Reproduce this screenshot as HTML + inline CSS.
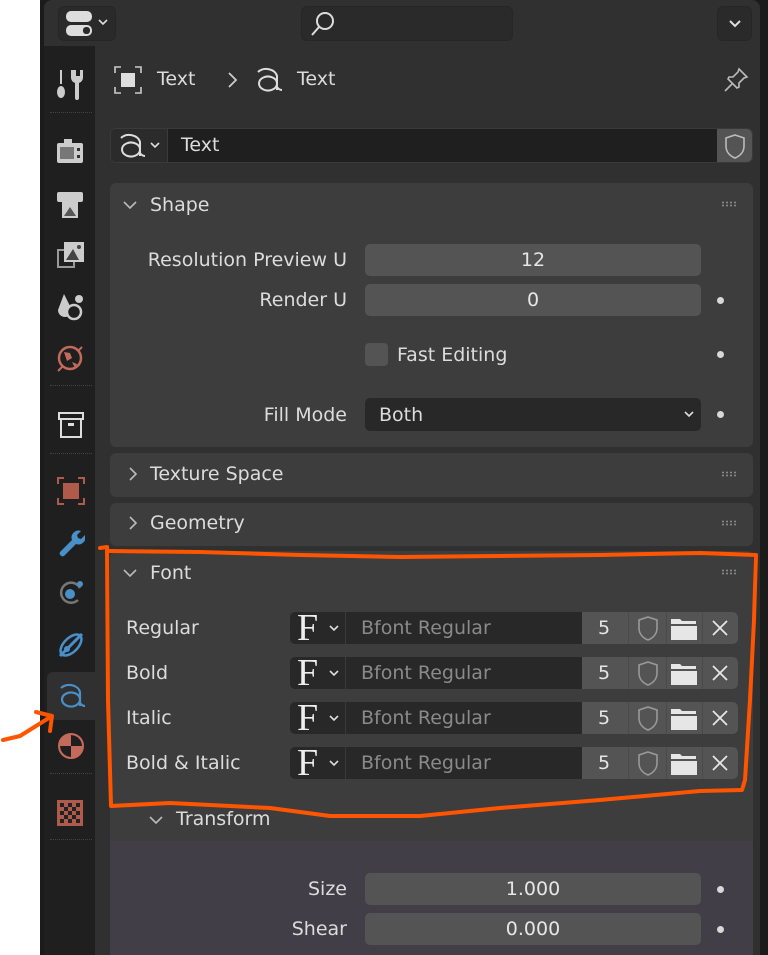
<!DOCTYPE html>
<html><head><meta charset="utf-8"><style>
*{box-sizing:border-box;margin:0;padding:0}
body{width:768px;height:955px;overflow:hidden;background:#fff;font-family:"DejaVu Sans","Liberation Sans",sans-serif;position:relative;color:#e0e0e0}
.a{position:absolute}
.t{position:absolute;font-size:19px;white-space:nowrap;color:#dcdcdc}
.r{text-align:right}
.fld{position:absolute;background:#545454;border-radius:5px;text-align:center;color:#e6e6e6;font-size:19px;line-height:32px}
.panel{position:absolute;left:110px;width:643px;background:#3d3d3d;border-radius:6px}
.grip{position:absolute;right:12px;width:16px;height:6px;background-image:radial-gradient(circle,#888 0.9px,transparent 1.1px);background-size:4px 3px}
.dot{position:absolute;width:7px;height:7px;border-radius:50%;background:#d8d8d8}
</style></head><body>
<div class="a" style="left:40px;top:0;width:728px;height:955px;background:#1b1b1b"></div>
<div class="a" style="left:44px;top:0;width:716px;height:955px;background:#303030;border-radius:8px 8px 0 0"></div>
<div class="a" style="left:44px;top:46px;width:51px;height:909px;background:#1f1f1f"></div>
<div class="a" style="left:47px;top:672px;width:48px;height:48px;background:#303030;border-radius:6px 0 0 6px"></div>
<div class="a" style="left:50px;top:112px;width:42px;border-top:1px dotted #444"></div>
<div class="a" style="left:50px;top:385px;width:42px;border-top:1px dotted #444"></div>
<div class="a" style="left:50px;top:453px;width:42px;border-top:1px dotted #444"></div>
<div class="a" style="left:50px;top:773px;width:42px;border-top:1px dotted #444"></div>
<div class="a" style="left:50px;top:839px;width:42px;border-top:1px dotted #444"></div>
<svg class="a" style="left:55px;top:68px" width="30" height="34" viewBox="0 0 30 34"><rect x="5" y="2" width="2" height="14" fill="#ccc"/><ellipse cx="6" cy="24" rx="4" ry="6" fill="#ccc"/><path d="M16 2v8a6 6 0 0 0 4 5v15a2 2 0 0 0 4 0V15a6 6 0 0 0 4-5V2l-3 0v6h-4V2z" fill="#ccc"/></svg>
<svg class="a" style="left:56px;top:137px" width="30" height="30" viewBox="0 0 30 30"><rect x="1" y="6" width="26" height="20" rx="2" fill="#ccc"/><rect x="8" y="2" width="8" height="5" fill="#ccc"/><rect x="4" y="10" width="14" height="12" fill="#777"/><rect x="21" y="11" width="3" height="3" fill="#333"/><rect x="21" y="18" width="3" height="3" fill="#333"/></svg>
<svg class="a" style="left:56px;top:190px" width="30" height="30" viewBox="0 0 30 30"><rect x="1" y="2" width="26" height="10" rx="2" fill="#ccc"/><rect x="6" y="8" width="16" height="20" fill="#ccc"/><path d="M8 26l6-9 6 9z" fill="#555"/></svg>
<svg class="a" style="left:56px;top:240px" width="30" height="30" viewBox="0 0 30 30"><rect x="2" y="10" width="16" height="17" fill="none" stroke="#999" stroke-width="2"/><rect x="8" y="2" width="20" height="20" fill="#ccc"/><path d="M10 20l7-11 6 11z" fill="#444"/><circle cx="23" cy="7" r="2" fill="#444"/></svg>
<svg class="a" style="left:56px;top:290px" width="30" height="32" viewBox="0 0 30 32"><path d="M8 4l8 16a7 7 0 0 1-14 0z" fill="#ccc"/><circle cx="23" cy="9" r="4" fill="#ccc"/><circle cx="18" cy="22" r="7" fill="#1f1f1f" stroke="#ccc" stroke-width="2.5"/></svg>
<svg class="a" style="left:56px;top:343px" width="30" height="30" viewBox="0 0 30 30"><circle cx="14" cy="15" r="11" fill="none" stroke="#c36a5b" stroke-width="2.5"/><path d="M8 9l6 1 2 5-5 3z M16 19l5 2-2 4z" fill="#c36a5b"/><path d="M2 28l4-4M26 4l-3 3" stroke="#c36a5b" stroke-width="2"/></svg>
<svg class="a" style="left:57px;top:410px" width="28" height="30" viewBox="0 0 28 30"><rect x="2" y="3" width="24" height="6" fill="none" stroke="#ddd" stroke-width="2"/><rect x="4" y="9" width="20" height="18" fill="none" stroke="#ddd" stroke-width="2"/><rect x="11" y="13" width="6" height="3" fill="#ddd"/></svg>
<svg class="a" style="left:57px;top:477px" width="28" height="28" viewBox="0 0 28 28"><rect x="6" y="6" width="16" height="16" fill="#b05a4c"/><path d="M1 7V1h6M21 1h6v6M27 21v6h-6M7 27H1v-6" fill="none" stroke="#b05a4c" stroke-width="2"/></svg>
<svg class="a" style="left:57px;top:528px" width="28" height="30" viewBox="0 0 28 30"><path d="M24 3a7 7 0 0 0-9 9L3 24a3 3 0 0 0 4 4l12-12a7 7 0 0 0 9-9l-4 4-3-1-1-3z" fill="#4a90c8"/></svg>
<svg class="a" style="left:56px;top:578px" width="30" height="30" viewBox="0 0 30 30"><path d="M22 22a10 10 0 1 1 2-12" fill="none" stroke="#777" stroke-width="2.5"/><circle cx="14" cy="16" r="5" fill="#4a90c8"/><circle cx="24" cy="6" r="3" fill="#4a90c8"/></svg>
<svg class="a" style="left:56px;top:630px" width="30" height="30" viewBox="0 0 30 30"><path d="M4 26L26 4" stroke="#4a90c8" stroke-width="3"/><ellipse cx="15" cy="15" rx="13" ry="7" transform="rotate(-45 15 15)" fill="none" stroke="#4a90c8" stroke-width="2.5"/><circle cx="11" cy="19" r="3" fill="#4a90c8"/></svg>
<svg class="a" style="left:57px;top:680px" width="30" height="32" viewBox="0 0 30 32"><path d="M4 8a11 9 0 0 1 19 4v14M23 19a9 7 0 1 0 0 1M23 23q2 3 5 3" fill="none" stroke="#4a90c8" stroke-width="2.2"/></svg>
<svg class="a" style="left:56px;top:731px" width="30" height="30" viewBox="0 0 30 30"><circle cx="15" cy="15" r="12" fill="#c36a5b"/><path d="M15 15V4a11 11 0 0 1 11 11z M15 15H4a11 11 0 0 0 11 11z" fill="#1f1f1f"/><circle cx="15" cy="15" r="12" fill="none" stroke="#c36a5b" stroke-width="2"/></svg>
<svg class="a" style="left:57px;top:800px" width="26" height="26" viewBox="0 0 26 26"><rect width="26" height="26" fill="#b05a4c"/><g fill="#222"><rect x="3" y="3" width="4" height="4"/><rect x="11" y="3" width="4" height="4"/><rect x="19" y="3" width="4" height="4"/><rect x="7" y="7" width="4" height="4"/><rect x="15" y="7" width="4" height="4"/><rect x="3" y="11" width="4" height="4"/><rect x="11" y="11" width="4" height="4"/><rect x="19" y="11" width="4" height="4"/><rect x="7" y="15" width="4" height="4"/><rect x="15" y="15" width="4" height="4"/><rect x="3" y="19" width="4" height="4"/><rect x="11" y="19" width="4" height="4"/><rect x="19" y="19" width="4" height="4"/></g></svg>

<div class="a" style="left:58px;top:6px;width:58px;height:35px;background:#2a2a2a;border:1px solid #262626;border-radius:6px"></div>
<div class="a" style="left:66px;top:11px;width:26px;height:11px;border-radius:5px;background:#ddd"></div>
<div class="a" style="left:66px;top:25px;width:26px;height:11px;border-radius:5px;background:#ddd"></div>
<div class="a" style="left:83px;top:27px;width:7px;height:7px;border-radius:3px;background:#2a2a2a"></div>
<svg class="a" style="left:97px;top:17px" width="12" height="10"><path d="M2 3l4 4 4-4" fill="none" stroke="#ddd" stroke-width="1.6"/></svg>
<div class="a" style="left:301px;top:6px;width:212px;height:35px;background:#2a2a2a;border:1px solid #262626;border-radius:6px"></div>
<svg class="a" style="left:308px;top:9px" width="30" height="30" viewBox="0 0 30 30"><circle cx="17" cy="12" r="8" fill="none" stroke="#ddd" stroke-width="2"/><path d="M11 18l-7 8" stroke="#ddd" stroke-width="2"/></svg>
<div class="a" style="left:717px;top:6px;width:35px;height:35px;background:#2a2a2a;border:1px solid #262626;border-radius:6px"></div>
<svg class="a" style="left:728px;top:19px" width="14" height="10"><path d="M2 2l5 5 5-5" fill="none" stroke="#ddd" stroke-width="2"/></svg>

<svg class="a" style="left:114px;top:66px" width="28" height="28" viewBox="0 0 28 28"><rect x="7" y="7" width="14" height="14" fill="#ddd"/><path d="M1 7V1h6M21 1h6v6M27 21v6h-6M7 27H1v-6" fill="none" stroke="#ccc" stroke-width="1.6"/></svg>
<div class="t" style="left:157px;top:68px">Text</div>
<svg class="a" style="left:226px;top:70px" width="14" height="20"><path d="M3 3l7 7-7 7" fill="none" stroke="#ccc" stroke-width="1.8"/></svg>
<svg class="a" style="left:254px;top:64px" width="30" height="32" viewBox="0 0 30 32"><path d="M4 8a11 9 0 0 1 19 4v14M23 19a9 7 0 1 0 0 1M23 23q2 3 5 3" fill="none" stroke="#ddd" stroke-width="2"/></svg>
<div class="t" style="left:297px;top:68px">Text</div>
<svg class="a" style="left:722px;top:66px" width="28" height="28" viewBox="0 0 28 28"><path d="M17 3l8 8-3 1-5 5 0 4-2 1-9-9 1-2 4 0 5-5z" fill="none" stroke="#bbb" stroke-width="1.6"/><path d="M10 18l-7 7" stroke="#bbb" stroke-width="1.6"/></svg>

<div class="a" style="left:110px;top:128px;width:643px;height:35px;background:#1f1f1f;border:1px solid #3a3a3a;border-radius:6px"></div>
<div class="a" style="left:111px;top:129px;width:57px;height:33px;background:#2b2b2b;border-radius:5px 0 0 5px;border-right:1px solid #3a3a3a"></div>
<svg class="a" style="left:117px;top:130px" width="30" height="32" viewBox="0 0 30 32"><path d="M4 8a11 9 0 0 1 19 4v14M23 19a9 7 0 1 0 0 1M23 23q2 3 5 3" fill="none" stroke="#ddd" stroke-width="2"/></svg>
<svg class="a" style="left:149px;top:141px" width="12" height="10"><path d="M2 2l4 4 4-4" fill="none" stroke="#ddd" stroke-width="1.6"/></svg>
<div class="t" style="left:181px;top:134px">Text</div>
<div class="a" style="left:717px;top:129px;width:35px;height:33px;background:#545454;border-radius:0 5px 5px 0"></div>
<svg class="a" style="left:722px;top:132px" width="26" height="28" viewBox="0 0 26 28"><path d="M13 3l9 3v8c0 6-4 10-9 12C8 24 4 20 4 14V6z" fill="none" stroke="#bbb" stroke-width="1.6"/></svg>

<div class="panel" style="top:183px;height:264px"></div>
<svg class="a" style="left:122px;top:198px" width="16" height="14"><path d="M2 4l6 6 6-6" fill="none" stroke="#bbb" stroke-width="1.6"/></svg>
<div class="t" style="left:150px;top:194px">Shape</div>
<div class="grip" style="left:721px;top:201px"></div>
<div class="t r" style="left:100px;width:247px;top:249px">Resolution Preview U</div>
<div class="fld" style="left:365px;top:244px;width:336px;height:32px">12</div>
<div class="t r" style="left:110px;width:237px;top:289px">Render U</div>
<div class="fld" style="left:365px;top:284px;width:336px;height:32px">0</div>
<div class="dot" style="left:717px;top:297px"></div>
<div class="a" style="left:365px;top:343px;width:23px;height:23px;background:#545454;border-radius:4px"></div>
<div class="t" style="left:397px;top:344px">Fast Editing</div>
<div class="dot" style="left:717px;top:351px"></div>
<div class="t r" style="left:110px;width:237px;top:404px">Fill Mode</div>
<div class="a" style="left:365px;top:398px;width:336px;height:33px;background:#282828;border-radius:5px"></div>
<div class="t" style="left:379px;top:404px">Both</div>
<svg class="a" style="left:683px;top:410px" width="12" height="10"><path d="M2 2l4 4 4-4" fill="none" stroke="#ddd" stroke-width="1.6"/></svg>
<div class="dot" style="left:717px;top:411px"></div>

<div class="panel" style="top:453px;height:44px"></div>
<svg class="a" style="left:127px;top:466px" width="14" height="16"><path d="M3 2l6 6-6 6" fill="none" stroke="#bbb" stroke-width="1.6"/></svg>
<div class="t" style="left:150px;top:463px">Texture Space</div>
<div class="grip" style="left:721px;top:471px"></div>
<div class="panel" style="top:503px;height:43px"></div>
<svg class="a" style="left:127px;top:515px" width="14" height="16"><path d="M3 2l6 6-6 6" fill="none" stroke="#bbb" stroke-width="1.6"/></svg>
<div class="t" style="left:150px;top:512px">Geometry</div>
<div class="grip" style="left:721px;top:520px"></div>

<div class="panel" style="top:551px;height:404px;border-radius:6px 6px 0 0"></div>
<svg class="a" style="left:122px;top:566px" width="16" height="14"><path d="M2 4l6 6 6-6" fill="none" stroke="#bbb" stroke-width="1.6"/></svg>
<div class="t" style="left:150px;top:562px">Font</div>
<div class="grip" style="left:721px;top:569px"></div>

<div id="rows"></div>

<svg class="a" style="left:148px;top:813px" width="16" height="14"><path d="M2 4l6 6 6-6" fill="none" stroke="#bbb" stroke-width="1.6"/></svg>
<div class="t" style="left:176px;top:808px">Transform</div>
<div class="a" style="left:110px;top:841px;width:643px;height:114px;background:#423e47"></div>
<div class="t r" style="left:110px;width:237px;top:878px">Size</div>
<div class="fld" style="left:365px;top:873px;width:336px;height:32px">1.000</div>
<div class="dot" style="left:717px;top:886px"></div>
<div class="t r" style="left:110px;width:237px;top:918px">Shear</div>
<div class="fld" style="left:365px;top:913px;width:336px;height:32px">0.000</div>
<div class="dot" style="left:717px;top:926px"></div>
<div class="a" style="left:760px;top:0;width:8px;height:955px;background:#1b1b1b"></div>

<script>
var labels=["Regular","Bold","Italic","Bold &amp; Italic"],tops=[612,657,702,747],h="";
for(var i=0;i<4;i++){var y=tops[i];
h+='<div class="t" style="left:126px;top:'+(y+5)+'px">'+labels[i]+'</div>'+
'<div class="a" style="left:290px;top:'+y+'px;width:448px;height:32px;background:#282828;border-radius:5px"></div>'+
'<div class="a" style="left:345px;top:'+y+'px;width:1px;height:32px;background:#3a3a3a"></div>'+
'<div class="a" style="left:297px;top:'+(y-5)+'px;font-family:\'Liberation Serif\',serif;font-size:38px;color:#eee;line-height:42px">F</div>'+
'<svg class="a" style="left:328px;top:'+(y+12)+'px" width="12" height="10"><path d="M2 2l4 4 4-4" fill="none" stroke="#ddd" stroke-width="1.6"/></svg>'+
'<div class="t" style="left:361px;top:'+(y+5)+'px;color:#8a8a8a">Bfont Regular</div>'+
'<div class="a" style="left:582px;top:'+y+'px;width:156px;height:32px;background:#545454;border-radius:0 5px 5px 0"></div>'+
'<div class="t" style="left:598px;top:'+(y+5)+'px;color:#e6e6e6">5</div>'+
'<div class="a" style="left:628px;top:'+y+'px;width:1px;height:32px;background:#4a4a4a"></div>'+
'<div class="a" style="left:666px;top:'+y+'px;width:1px;height:32px;background:#4a4a4a"></div>'+
'<div class="a" style="left:702px;top:'+y+'px;width:1px;height:32px;background:#4a4a4a"></div>'+
'<svg class="a" style="left:635px;top:'+(y+3)+'px" width="26" height="28" viewBox="0 0 26 28"><path d="M13 2l9 3v8c0 6-4 10-9 12C8 23 4 19 4 13V5z" fill="none" stroke="#999" stroke-width="1.6"/></svg>'+
'<svg class="a" style="left:670px;top:'+(y+5)+'px" width="28" height="24" viewBox="0 0 28 24"><path d="M1 2h9l2 2h14v3H1z M1 9h26v14H1z" fill="#e6e6e6"/></svg>'+
'<svg class="a" style="left:711px;top:'+(y+7)+'px" width="18" height="18"><path d="M2 2l14 14M16 2L2 16" stroke="#e6e6e6" stroke-width="1.8"/></svg>';}
document.getElementById('rows').innerHTML=h;
</script>

<svg class="a" style="left:0;top:0" width="768" height="955">
<path d="M100 548 L107 547 L108 700 L111 806 L170 803 L270 808 L330 816 L420 816 L500 808 L600 800 L700 791 L742 790 L745 780 L750 700 L754 620 L756 555 L700 553 L600 555 L400 557 L300 555 L200 552 L110 551" fill="none" stroke="#ff5500" stroke-width="4" stroke-linejoin="round" stroke-linecap="round"/>
<path d="M3 740 L20 736 L52 716 M36 712 L52 716 L50 731" fill="none" stroke="#ff5500" stroke-width="4" stroke-linecap="round" stroke-linejoin="round"/>
</svg>
</body></html>
